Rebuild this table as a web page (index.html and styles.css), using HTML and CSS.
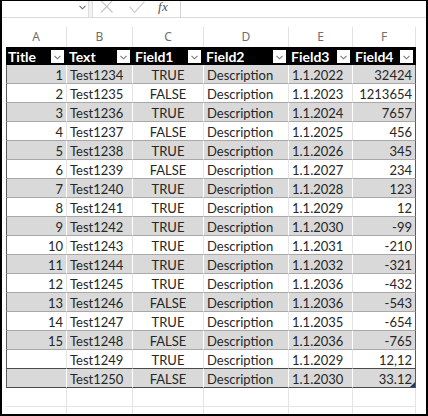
FILE: index.html
```html
<!DOCTYPE html>
<html>
<head>
<meta charset="utf-8">
<link rel="stylesheet" href="styles.css">
</head>
<body>
<div class="frame">
  <div class="fbar">
    <div class="namebox">
      <svg class="chev" width="7" height="5" viewBox="0 0 7 5"><polyline points="0.5,0.8 3.5,3.8 6.5,0.8" fill="none" stroke="#6a6a6a" stroke-width="1.1"/></svg>
    </div>
    <div class="fsep"></div>
    <div class="ficons">
      <svg class="ico-x" width="13" height="13" viewBox="0 0 13 13"><path d="M1 0.5 L12.5 12.5 M12.5 0.5 L1 12.5" stroke="#c4c4c4" stroke-width="1.1" fill="none"/></svg>
      <svg class="ico-ok" width="16" height="13" viewBox="0 0 16 13"><polyline points="0.5,5.5 5.5,11.5 15.5,0.5" stroke="#c4c4c4" stroke-width="1.1" fill="none"/></svg>
      <span class="fx">fx</span>
    </div>
    <div class="finput"></div>
  </div>

  <div class="sheet">
    <div class="row colhead">
      <span class="pad"></span><span class="ch">A</span><span class="ch">B</span><span class="ch">C</span><span class="ch">D</span><span class="ch">E</span><span class="ch">F</span><span class="pad"></span>
    </div>

    <div class="row thead">
      <span class="pad"></span>
      <span class="h first"><span class="ht">Title</span><span class="fb"><svg width="7" height="5" viewBox="0 0 7 5"><polyline points="0.5,0.8 3.5,3.8 6.5,0.8" fill="none" stroke="#777" stroke-width="1.1"/></svg></span></span>
      <span class="h"><span class="ht">Text</span><span class="fb"><svg width="7" height="5" viewBox="0 0 7 5"><polyline points="0.5,0.8 3.5,3.8 6.5,0.8" fill="none" stroke="#777" stroke-width="1.1"/></svg></span></span>
      <span class="h"><span class="ht">Field1</span><span class="fb"><svg width="7" height="5" viewBox="0 0 7 5"><polyline points="0.5,0.8 3.5,3.8 6.5,0.8" fill="none" stroke="#777" stroke-width="1.1"/></svg></span></span>
      <span class="h"><span class="ht">Field2</span><span class="fb"><svg width="7" height="5" viewBox="0 0 7 5"><polyline points="0.5,0.8 3.5,3.8 6.5,0.8" fill="none" stroke="#777" stroke-width="1.1"/></svg></span></span>
      <span class="h"><span class="ht">Field3</span><span class="fb"><svg width="7" height="5" viewBox="0 0 7 5"><polyline points="0.5,0.8 3.5,3.8 6.5,0.8" fill="none" stroke="#777" stroke-width="1.1"/></svg></span></span>
      <span class="h last"><span class="ht">Field4</span><span class="fb"><svg width="7" height="5" viewBox="0 0 7 5"><polyline points="0.5,0.8 3.5,3.8 6.5,0.8" fill="none" stroke="#777" stroke-width="1.1"/></svg></span></span>
      <span class="pad"></span>
    </div>

    <div class="row data band"><span class="pad"></span><span class="c num first">1</span><span class="c">Test1234</span><span class="c ctr">TRUE</span><span class="c">Description</span><span class="c">1.1.2022</span><span class="c num last">32424</span><span class="pad"></span></div>
    <div class="row data"><span class="pad"></span><span class="c num first">2</span><span class="c">Test1235</span><span class="c ctr">FALSE</span><span class="c">Description</span><span class="c">1.1.2023</span><span class="c num last">1213654</span><span class="pad"></span></div>
    <div class="row data band"><span class="pad"></span><span class="c num first">3</span><span class="c">Test1236</span><span class="c ctr">TRUE</span><span class="c">Description</span><span class="c">1.1.2024</span><span class="c num last">7657</span><span class="pad"></span></div>
    <div class="row data"><span class="pad"></span><span class="c num first">4</span><span class="c">Test1237</span><span class="c ctr">FALSE</span><span class="c">Description</span><span class="c">1.1.2025</span><span class="c num last">456</span><span class="pad"></span></div>
    <div class="row data band"><span class="pad"></span><span class="c num first">5</span><span class="c">Test1238</span><span class="c ctr">TRUE</span><span class="c">Description</span><span class="c">1.1.2026</span><span class="c num last">345</span><span class="pad"></span></div>
    <div class="row data"><span class="pad"></span><span class="c num first">6</span><span class="c">Test1239</span><span class="c ctr">FALSE</span><span class="c">Description</span><span class="c">1.1.2027</span><span class="c num last">234</span><span class="pad"></span></div>
    <div class="row data band"><span class="pad"></span><span class="c num first">7</span><span class="c">Test1240</span><span class="c ctr">TRUE</span><span class="c">Description</span><span class="c">1.1.2028</span><span class="c num last">123</span><span class="pad"></span></div>
    <div class="row data"><span class="pad"></span><span class="c num first">8</span><span class="c">Test1241</span><span class="c ctr">TRUE</span><span class="c">Description</span><span class="c">1.1.2029</span><span class="c num last">12</span><span class="pad"></span></div>
    <div class="row data band"><span class="pad"></span><span class="c num first">9</span><span class="c">Test1242</span><span class="c ctr">TRUE</span><span class="c">Description</span><span class="c">1.1.2030</span><span class="c num last">-99</span><span class="pad"></span></div>
    <div class="row data"><span class="pad"></span><span class="c num first">10</span><span class="c">Test1243</span><span class="c ctr">TRUE</span><span class="c">Description</span><span class="c">1.1.2031</span><span class="c num last">-210</span><span class="pad"></span></div>
    <div class="row data band"><span class="pad"></span><span class="c num first">11</span><span class="c">Test1244</span><span class="c ctr">TRUE</span><span class="c">Description</span><span class="c">1.1.2032</span><span class="c num last">-321</span><span class="pad"></span></div>
    <div class="row data"><span class="pad"></span><span class="c num first">12</span><span class="c">Test1245</span><span class="c ctr">TRUE</span><span class="c">Description</span><span class="c">1.1.2036</span><span class="c num last">-432</span><span class="pad"></span></div>
    <div class="row data band"><span class="pad"></span><span class="c num first">13</span><span class="c">Test1246</span><span class="c ctr">FALSE</span><span class="c">Description</span><span class="c">1.1.2036</span><span class="c num last">-543</span><span class="pad"></span></div>
    <div class="row data"><span class="pad"></span><span class="c num first">14</span><span class="c">Test1247</span><span class="c ctr">TRUE</span><span class="c">Description</span><span class="c">1.1.2035</span><span class="c num last">-654</span><span class="pad"></span></div>
    <div class="row data band"><span class="pad"></span><span class="c num first">15</span><span class="c">Test1248</span><span class="c ctr">FALSE</span><span class="c">Description</span><span class="c">1.1.2036</span><span class="c num last">-765</span><span class="pad"></span></div>
    <div class="row data prefinal"><span class="pad"></span><span class="c num first"></span><span class="c">Test1249</span><span class="c ctr">TRUE</span><span class="c">Description</span><span class="c">1.1.2029</span><span class="c num last">12,12</span><span class="pad"></span></div>
    <div class="row data band final"><span class="pad"></span><span class="c num first"></span><span class="c">Test1250</span><span class="c ctr">FALSE</span><span class="c">Description</span><span class="c">1.1.2030</span><span class="c num last handle">33.12</span><span class="pad"></span></div>

    <div class="row blank"><span class="pad"></span><span class="g"></span><span class="g"></span><span class="g"></span><span class="g"></span><span class="g"></span><span class="g"></span><span class="pad"></span></div>
    <div class="row blank"><span class="pad"></span><span class="g"></span><span class="g"></span><span class="g"></span><span class="g"></span><span class="g"></span><span class="g"></span><span class="pad"></span></div>
  </div>
</div>
</body>
</html>
```

FILE: styles.css
```css
html, body {
  margin: 0;
  padding: 0;
  background: #fff;
}

.frame {
  width: 428px;
  height: 416px;
  box-sizing: border-box;
  border: 2px solid #000;
  border-top-width: 1px;
  overflow: hidden;
  background: #fff;
  font-family: "Lato", "Liberation Sans", sans-serif;
}

/* formula bar */
.fbar {
  display: flex;
  height: 17px;
  box-sizing: border-box;
  border-bottom: 1px solid #d9d9d9;
}

.namebox {
  width: 86px;
  box-sizing: border-box;
  display: flex;
  justify-content: flex-end;
  align-items: flex-start;
  padding: 4px 2px 0 0;
}

.fsep {
  width: 3px;
  background: #f2f2f2;
  border-left: 1px solid #dedede;
  border-right: 1px solid #dedede;
}

.ficons {
  width: 87px;
  display: flex;
  align-items: flex-start;
}

.ico-x {
  margin-left: 7px;
  margin-top: -1px;
}

.ico-ok {
  margin-left: 16px;
  margin-top: 0;
}

.fx {
  margin-left: 13px;
  font-family: "Liberation Serif", serif;
  font-style: italic;
  font-size: 13px;
  line-height: 11px;
  color: #505050;
  letter-spacing: 0.5px;
}

.finput {
  flex: 1;
  border-left: 1px solid #d4d4d4;
}

/* sheet */
.sheet {
  margin-top: 9px;
}

.row {
  display: grid;
  grid-template-columns: 4px 61px 66px 71px 85px 64px 63px 1fr;
  box-sizing: border-box;
}

.colhead {
  height: 20px;
}

.ch {
  font-family: "Noto Sans", sans-serif;
  font-size: 12px;
  line-height: 20px;
  color: #6e6e6e;
  text-align: center;
  border-right: 1px solid #e2e2e2;
  box-sizing: border-box;
}

.thead {
  height: 18px;
}

.h {
  background: #000;
  display: flex;
  justify-content: space-between;
  align-items: flex-start;
  overflow: hidden;
}

.ht {
  color: #fff;
  font-weight: 700;
  font-size: 14px;
  line-height: 17px;
  padding: 1px 0 0 2px;
  white-space: nowrap;
}

.fb {
  width: 13px;
  height: 13px;
  margin: 3px 3px 0 0;
  background: #fff;
  display: flex;
  align-items: center;
  justify-content: center;
  flex: none;
}

.fb svg {
  display: block;
  margin-top: 1px;
}

.data {
  height: 19px;
}

.c {
  box-sizing: border-box;
  font-size: 13px;
  line-height: 16px;
  padding: 2px 3px 0 3px;
  color: #262626;
  white-space: nowrap;
  overflow: hidden;
  border-right: 1px solid #e4e4e4;
  border-bottom: 1px solid #a8a8a8;
  background: #fff;
}

.band .c {
  background: #d9d9d9;
  border-right-color: #fff;
}

.c.first {
  border-left: 1px solid #5a5a5a;
}

.c.last {
  border-right: 1px solid #5a5a5a;
}

.prefinal .c,
.final .c {
  border-bottom-color: #4a4a4a;
}

.num {
  text-align: right;
}

.ctr {
  text-align: center;
}

.handle {
  position: relative;
}

.handle::after {
  content: "";
  position: absolute;
  right: 0;
  bottom: 0;
  width: 0;
  height: 0;
  border-left: 5px solid transparent;
  border-bottom: 5px solid #1e3a66;
}

.blank {
  height: 19px;
}

.g {
  box-sizing: border-box;
  border-right: 1px solid #e4e4e4;
  border-bottom: 1px solid #e4e4e4;
}
```
